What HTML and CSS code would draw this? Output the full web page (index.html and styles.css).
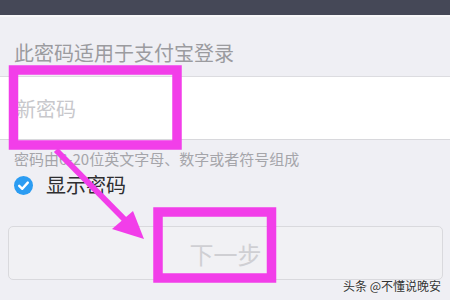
FILE: index.html
```html
<!DOCTYPE html>
<html lang="zh-cn">
<head>
    <meta charset="UTF-8">
    <meta name="viewport" content="width=device-width, initial-scale=1.0">
    <title>设置密码</title>
    <link rel="stylesheet" href="styles.css">
</head>
<body>
    <div class="topbar"></div>
    <div class="page">
        <p class="caption">此密码适用于支付宝登录</p>
        <div class="input-row">
            <input type="password" class="pwd" placeholder="新密码">
        </div>
        <p class="hint">密码由6-20位英文字母、数字或者符号组成</p>
        <label class="show-pwd">
            <span class="check">
                <svg width="19" height="19" viewBox="0 0 19 19">
                    <circle cx="9.5" cy="9.5" r="9.5" fill="#2b9cf2"/>
                    <path d="M5.2 9.8 L8.3 12.8 L13.8 6.6" fill="none" stroke="#fff" stroke-width="2.4" stroke-linecap="round" stroke-linejoin="round"/>
                </svg>
            </span>
            <span>显示密码</span>
        </label>
        <button class="next" disabled>下一步</button>
    </div>

    <!-- marcações em cima da tela -->
    <svg class="marks" width="450" height="300" viewBox="0 0 450 300">
        <rect x="13.5" y="70" width="163.5" height="75" fill="none" stroke="#f23ee9" stroke-width="9.5"/>
        <rect x="158" y="212" width="113.5" height="66" fill="none" stroke="#f23ee9" stroke-width="9.5"/>
        <line x1="56" y1="150" x2="128" y2="223" stroke="#f23ee9" stroke-width="6"/>
        <polygon points="144,239 112,229 133,211" fill="#f23ee9"/>
    </svg>
    <div class="watermark">头条 @不懂说晚安</div>
</body>
</html>
```

FILE: styles.css
```css
body {
    margin: 0;
    width: 450px;
    height: 300px;
    overflow: hidden;
    background-color: #efeff4;
    font-family: "Noto Sans CJK SC", "Noto Sans", sans-serif;
    position: relative;
}
.topbar {
    height: 15px;
    background-color: #454857;
    border-bottom: 2px solid #f7f7f9;
}
.page {
    display: flex;
    flex-direction: column;
}
.caption {
    margin: 0;
    padding: 25px 0 0 14px;
    height: 34px;
    font-size: 20px;
    line-height: 22px;
    color: #9b9b9f;
}
.input-row {
    background-color: #fff;
    height: 62px;
    border-top: 1px solid #dcdce0;
    border-bottom: 1px solid #d8d8dc;
    display: flex;
    align-items: center;
}
.pwd {
    border: none;
    outline: none;
    background: transparent;
    font-family: inherit;
    font-size: 20px;
    padding: 0 0 0 16px;
    width: 300px;
}
.pwd::placeholder {
    color: #c8c8cc;
}
.hint {
    margin: 0;
    padding: 10px 0 0 14px;
    font-size: 15px;
    line-height: 18px;
    color: #a5a5aa;
}
.show-pwd {
    display: flex;
    align-items: center;
    gap: 13px;
    padding: 4px 0 0 14px;
    font-size: 20px;
    line-height: 26px;
    color: #2e2e30;
}
.check {
    display: flex;
}
.next {
    margin: 28px 7px 0 8px;
    height: 54px;
    border: 1px solid #d9d9dd;
    border-radius: 5px;
    background-color: #f1f1f4;
    font-family: inherit;
    font-size: 24px;
    color: #cfcfd3;
}
.marks {
    position: absolute;
    left: 0;
    top: 0;
}
.watermark {
    position: absolute;
    right: 9px;
    bottom: 6px;
    font-size: 12px;
    color: #333;
    text-shadow: 0 0 2px #fff;
}
```
